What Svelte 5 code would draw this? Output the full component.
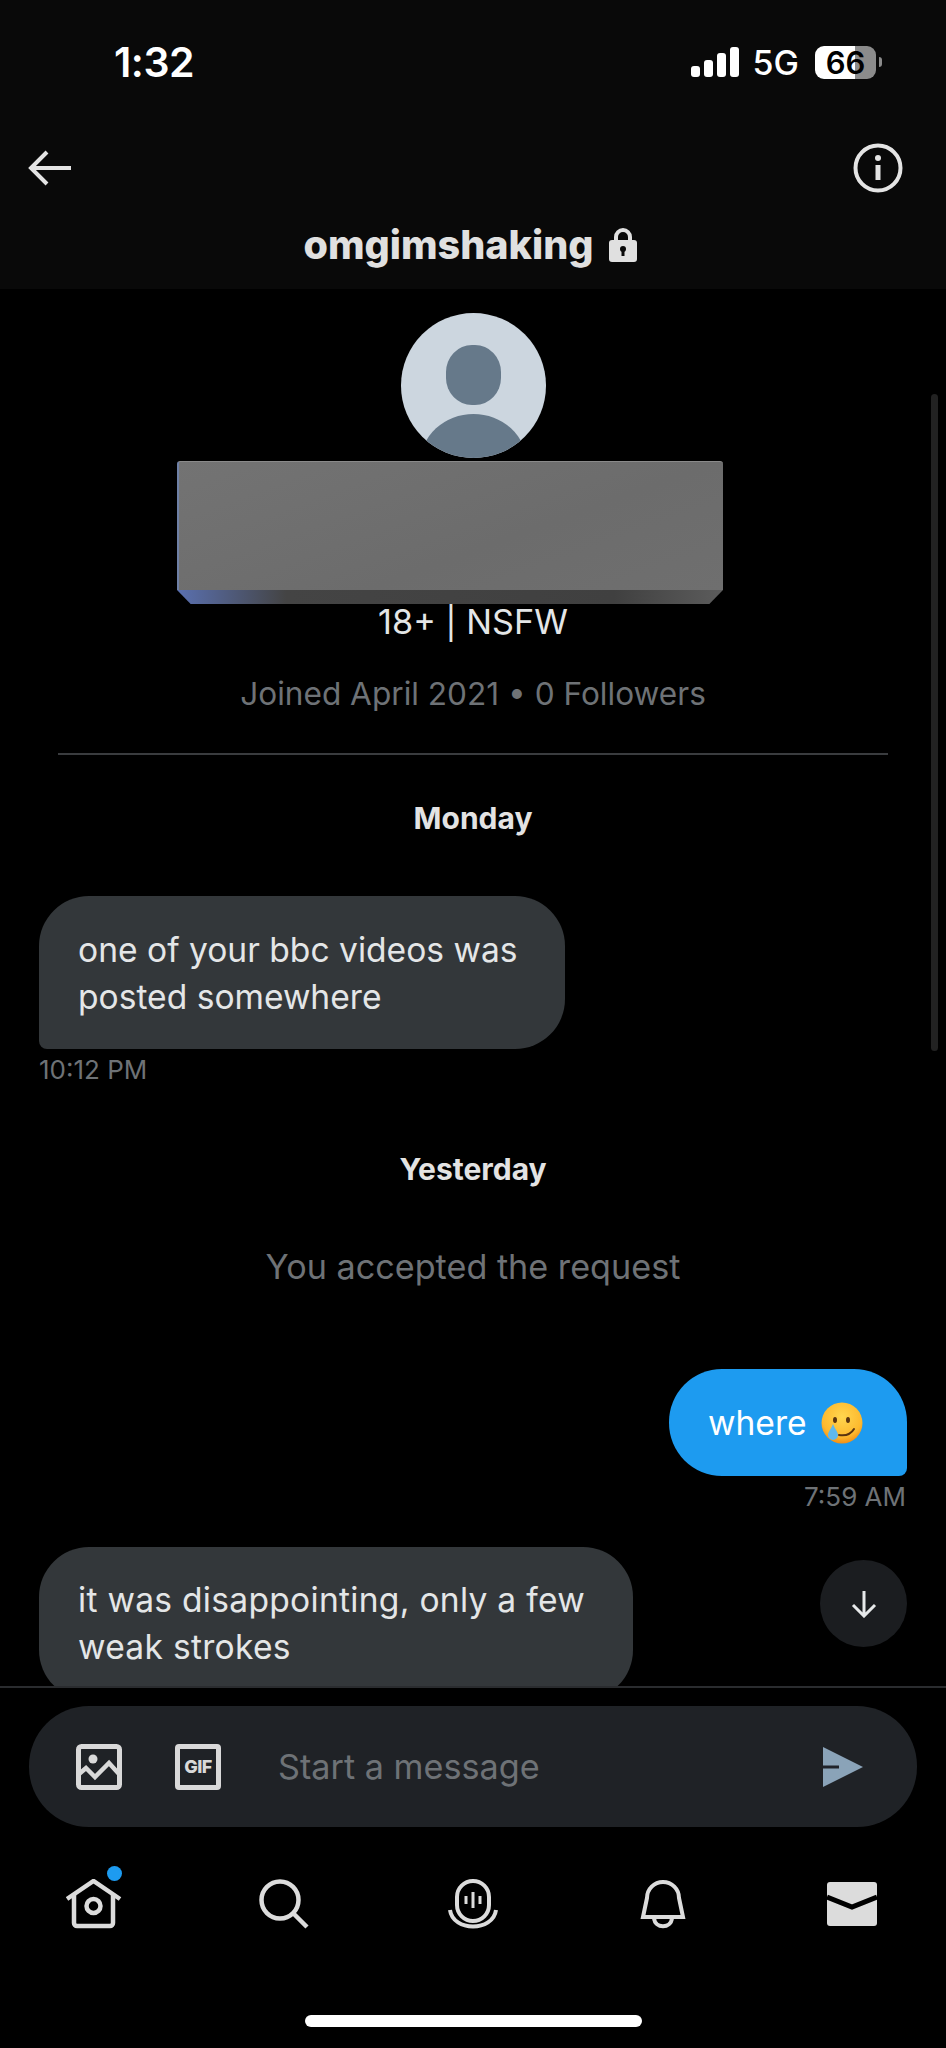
<script>
	const lines = {
		first: ['one of your bbc videos was', 'posted somewhere'],
		second: ['it was disappointing, only a few', 'weak strokes']
	};
</script>

<div class="phone">
	<header class="top">
		<div class="status">
			<span class="clock">1:32</span>
			<div class="status-right">
				<div class="signal">
					<i class="b1"></i><i class="b2"></i><i class="b3"></i><i class="b4"></i>
				</div>
				<span class="net">5G</span>
				<div class="battery"><span>66</span></div>
				<i class="nub"></i>
			</div>
		</div>
		<div class="actions">
			<svg class="back" width="44" height="36" viewBox="0 0 44 36" fill="none" stroke="#e4e4e4" stroke-width="4">
				<path d="M44 18H4M20 2 4 18l16 16" />
			</svg>
			<svg width="50" height="50" viewBox="0 0 50 50" fill="none" stroke="#e4e4e4" stroke-width="4">
				<circle cx="25" cy="25" r="22.5" />
				<path d="M25 22v15" stroke-width="5" />
				<circle cx="25" cy="15" r="3" fill="#e4e4e4" stroke="none" />
			</svg>
		</div>
		<div class="title">
			<span>omgimshaking</span>
			<svg width="28" height="34" viewBox="0 0 28 34">
				<path d="M7 14V9a7 7 0 0 1 14 0v5" fill="none" stroke="#e0e0e0" stroke-width="4" />
				<rect y="12" width="28" height="22" rx="3" fill="#e0e0e0" />
				<circle cx="14" cy="21" r="3" fill="#090909" />
				<rect x="12.5" y="21" width="3" height="7" fill="#090909" />
			</svg>
		</div>
	</header>

	<main class="chat">
		<div class="profile">
			<svg class="avatar" width="145" height="145" viewBox="0 0 145 145">
				<defs><clipPath id="round"><circle cx="72.5" cy="72.5" r="72.5" /></clipPath></defs>
				<g clip-path="url(#round)">
					<rect width="145" height="145" fill="#ccd6df" />
					<rect x="45" y="32" width="55" height="60" rx="26" ry="27" fill="#66798a" />
					<ellipse cx="72.5" cy="150" rx="53" ry="49" fill="#66798a" />
				</g>
			</svg>
			<div class="redacted"><div class="face"></div><div class="bevel"></div></div>
			<p class="bio">18+ | NSFW</p>
			<p class="joined">Joined April 2021 • 0 Followers</p>
		</div>
		<hr />
		<p class="day monday">Monday</p>

		<div class="bubble in first">
			{#each lines.first as line}<div>{line}</div>{/each}
		</div>
		<p class="stamp">10:12 PM</p>

		<p class="day yesterday">Yesterday</p>
		<p class="notice">You accepted the request</p>

		<div class="bubble out">
			<span>where</span>
			<svg width="42" height="42" viewBox="0 0 42 42">
				<defs>
					<radialGradient id="skin" cx="50%" cy="35%" r="65%">
						<stop offset="0%" stop-color="#ffd64f" />
						<stop offset="75%" stop-color="#fdb92e" />
						<stop offset="100%" stop-color="#f28f16" />
					</radialGradient>
				</defs>
				<circle cx="21" cy="21" r="20.5" fill="url(#skin)" />
				<ellipse cx="14" cy="18" rx="2" ry="3" fill="#5a3410" />
				<ellipse cx="27" cy="18" rx="2" ry="3" fill="#5a3410" />
				<path d="M18 33c6 1 12-1 15-6" fill="none" stroke="#5a3410" stroke-width="2" stroke-linecap="round" />
				<path d="M12 22c2 5 5 8 5 11a5 5 0 0 1-10 0c0-3 3-6 5-11z" fill="#5fb8ee" />
			</svg>
		</div>
		<p class="stamp right">7:59 AM</p>

		<div class="bubble in second">
			{#each lines.second as line}<div>{line}</div>{/each}
		</div>

		<i class="scrollbar"></i>
		<button class="down" aria-label="Scroll to bottom">
			<svg width="26" height="28" viewBox="0 0 26 28" fill="none" stroke="#e7e9ea" stroke-width="3">
				<path d="M13 1v25M2 15l11 11 11-11" />
			</svg>
		</button>
	</main>

	<footer class="foot">
		<div class="composer">
			<svg class="media" width="46" height="46" viewBox="0 0 46 46" fill="none" stroke="#d9d9d9" stroke-width="5">
				<rect x="2.5" y="2.5" width="41" height="41" rx="3" />
				<circle cx="17" cy="15" r="4.5" fill="#d9d9d9" stroke="none" />
				<path d="M3 30l7-6 9 9 14-14 10 11" stroke-width="4.5" />
			</svg>
			<div class="gif">GIF</div>
			<span class="placeholder">Start a message</span>
			<svg class="send" width="40" height="40" viewBox="0 0 40 40">
				<path d="M0 0 40 20 0 40z" fill="#8aa3b8" />
				<path d="M0 20h16" stroke="#20232a" stroke-width="3" />
			</svg>
		</div>

		<nav class="tabs">
			<div class="tab home">
				<svg width="56" height="50" viewBox="0 0 56 50" fill="none" stroke="#dcdcdc" stroke-width="4.5">
					<path d="M1 20 27.5 2 54 20" />
					<path d="M8 15v29a3 3 0 0 0 3 3h33a3 3 0 0 0 3-3V15" />
					<circle cx="27.5" cy="27" r="7" />
				</svg>
				<i class="dot"></i>
			</div>
			<svg width="50" height="50" viewBox="0 0 50 50" fill="none" stroke="#dcdcdc" stroke-width="4.5">
				<circle cx="21" cy="21" r="18.5" />
				<path d="M33 33l15 15" />
			</svg>
			<svg width="50" height="50" viewBox="0 0 50 50" fill="none" stroke="#dcdcdc" stroke-width="4">
				<rect x="9" y="2" width="32" height="40" rx="16" />
				<path d="M2 31c3 22 43 22 46 0" />
				<path d="M18 17v8M25 13v16M32 17v8" stroke-width="3" />
			</svg>
			<svg width="46" height="50" viewBox="0 0 46 50" fill="none" stroke="#dcdcdc" stroke-width="4">
				<path d="M3 38 7 19a16 16 0 0 1 32 0l4 19z" />
				<path d="M14 39c1 11 17 11 18 0" />
			</svg>
			<svg width="50" height="44" viewBox="0 0 50 44">
				<rect width="50" height="44" rx="3" fill="#dcdcdc" />
				<path d="M0 15 25 25 50 15" fill="none" stroke="#000" stroke-width="5" />
			</svg>
		</nav>

		<div class="homebar"></div>
	</footer>
</div>

<style>
	:global(body) {
		margin: 0;
		background: #000;
	}

	.phone {
		width: 946px;
		height: 2048px;
		display: flex;
		flex-direction: column;
		overflow: hidden;
		background: #000;
		color: #e4e6e7;
		font-family: Inter, 'Liberation Sans', sans-serif;
	}

	p {
		margin: 0;
	}

	/* header */
	.top {
		height: 289px;
		flex: none;
		box-sizing: border-box;
		background: #090909;
	}

	.status {
		display: flex;
		justify-content: space-between;
		align-items: center;
		padding: 44px 64px 0 114px;
		height: 36px;
	}

	.clock {
		font-size: 41px;
		font-weight: 600;
		color: #fff;
		letter-spacing: -0.5px;
	}

	.status-right {
		display: flex;
		align-items: center;
	}

	.signal {
		display: flex;
		align-items: flex-end;
		gap: 4px;
		height: 30px;
		margin-right: 14px;
	}

	.signal i {
		display: block;
		width: 9px;
		background: #fff;
		border-radius: 3px;
	}

	.b1 { height: 11px; }
	.b2 { height: 17px; }
	.b3 { height: 24px; }
	.b4 { height: 30px; }

	.net {
		font-size: 34px;
		font-weight: 500;
		color: #fff;
		margin-right: 16px;
	}

	.battery {
		width: 61px;
		height: 33px;
		border-radius: 9px;
		display: flex;
		align-items: center;
		justify-content: center;
		background: linear-gradient(90deg, #fff 0 40px, #8b8b8b 40px);
		color: #000;
		font-size: 31px;
		font-weight: 600;
	}

	.nub {
		width: 3px;
		height: 10px;
		margin-left: 3px;
		background: #8b8b8b;
		border-radius: 0 3px 3px 0;
	}

	.actions {
		display: flex;
		justify-content: space-between;
		align-items: center;
		padding: 63px 43px 0 27px;
	}

	.title {
		display: flex;
		justify-content: center;
		align-items: center;
		gap: 15px;
		margin-top: 28px;
		padding-right: 6px;
		font-size: 39.5px;
		font-weight: 800;
		color: #e0e0e0;
	}

	/* chat */
	.chat {
		position: relative;
		flex: 1;
		min-height: 0;
		overflow: hidden;
		padding-top: 24px;
	}

	.profile {
		display: flex;
		flex-direction: column;
		align-items: center;
	}

	.avatar {
		display: block;
	}

	.redacted {
		width: 546px;
		margin: 3px 0 0 177px;
		align-self: flex-start;
	}

	.face {
		height: 129px;
		border-radius: 3px 3px 0 0;
		background: linear-gradient(160deg, #737373, #6c6c6c 60%, #6f6f6f);
		border-top: 1px solid #8a8a8a;
		border-left: 2px solid #6e80a6;
		box-sizing: border-box;
	}

	.bevel {
		height: 14px;
		clip-path: polygon(0 0, 100% 0, 97.5% 100%, 2.5% 100%);
		background: linear-gradient(90deg, #5a70b0, #444 20%, #404040 80%, #5c5c5c);
	}

	.bio {
		font-size: 34.2px;
		line-height: 38px;
		margin-top: -1px;
	}

	.joined {
		margin-top: 33px;
		font-size: 31.6px;
		line-height: 40px;
		color: #6e7276;
	}

	hr {
		margin: 39px 58px 0;
		border: none;
		height: 2px;
		background: #3a3c3f;
	}

	.day {
		text-align: center;
		font-size: 30px;
		font-weight: 700;
		line-height: 40px;
		color: #e3e3e3;
	}

	.monday {
		margin-top: 43px;
	}

	.yesterday {
		margin-top: 61px;
	}

	.notice {
		margin-top: 58px;
		text-align: center;
		font-size: 34.2px;
		line-height: 40px;
		color: #6e7276;
	}

	.bubble {
		box-sizing: border-box;
		font-size: 33.6px;
		line-height: 47px;
	}

	.in {
		margin-left: 39px;
		padding: 30px 39px 0;
		background: #33373a;
		border-radius: 50px 50px 50px 8px;
	}

	.first {
		width: 526px;
		height: 153px;
		margin-top: 58px;
	}

	.second {
		width: 594px;
		height: 153px;
		margin-top: 32px;
		padding-top: 29px;
		border-radius: 50px;
		letter-spacing: 0.28px;
	}

	.out {
		display: flex;
		align-items: center;
		gap: 14px;
		width: 238px;
		height: 107px;
		margin: 82px 39px 0 auto;
		padding-left: 39px;
		color: #fff;
		background: #1d9bf0;
		border-radius: 53px 53px 8px 53px;
	}

	.stamp {
		margin: 3px 0 0 39px;
		font-size: 26px;
		line-height: 36px;
		color: #6e7276;
	}

	.stamp.right {
		margin: 3px 40px 0 0;
		text-align: right;
	}

	.scrollbar {
		position: absolute;
		top: 105px;
		right: 8px;
		width: 7px;
		height: 657px;
		border-radius: 4px;
		background: #222;
	}

	.down {
		position: absolute;
		top: 1271px;
		left: 820px;
		width: 87px;
		height: 87px;
		padding: 0;
		border: none;
		border-radius: 50%;
		display: flex;
		align-items: center;
		justify-content: center;
		background: #1b1d20;
	}

	/* composer + tabs */
	.foot {
		flex: none;
		height: 362px;
		box-sizing: border-box;
		border-top: 2px solid #2a2c2f;
		padding-top: 18px;
		background: #000;
	}

	.composer {
		display: flex;
		align-items: center;
		height: 121px;
		margin: 0 29px;
		padding: 0 54px 0 47px;
		border-radius: 60px;
		background: #1f2226;
	}

	.gif {
		box-sizing: border-box;
		width: 46px;
		height: 46px;
		margin-left: 53px;
		display: flex;
		align-items: center;
		justify-content: center;
		border: 5px solid #d9d9d9;
		border-radius: 4px;
		font-size: 18px;
		font-weight: 800;
		letter-spacing: -0.5px;
		color: #d9d9d9;
	}

	.placeholder {
		flex: 1;
		margin-left: 57px;
		font-size: 34.2px;
		color: #6e7276;
	}

	.tabs {
		display: grid;
		grid-template-columns: 193px 189px 192px 187px 50px;
		align-items: center;
		margin-top: 52px;
		padding-left: 66px;
	}

	.tab {
		position: relative;
		display: flex;
		width: 56px;
	}

	.dot {
		position: absolute;
		top: -13px;
		right: 0;
		width: 15px;
		height: 15px;
		border-radius: 50%;
		background: #1d9bf0;
	}

	.homebar {
		width: 337px;
		height: 12px;
		margin: 86px auto 0;
		border-radius: 6px;
		background: #fff;
	}
</style>
